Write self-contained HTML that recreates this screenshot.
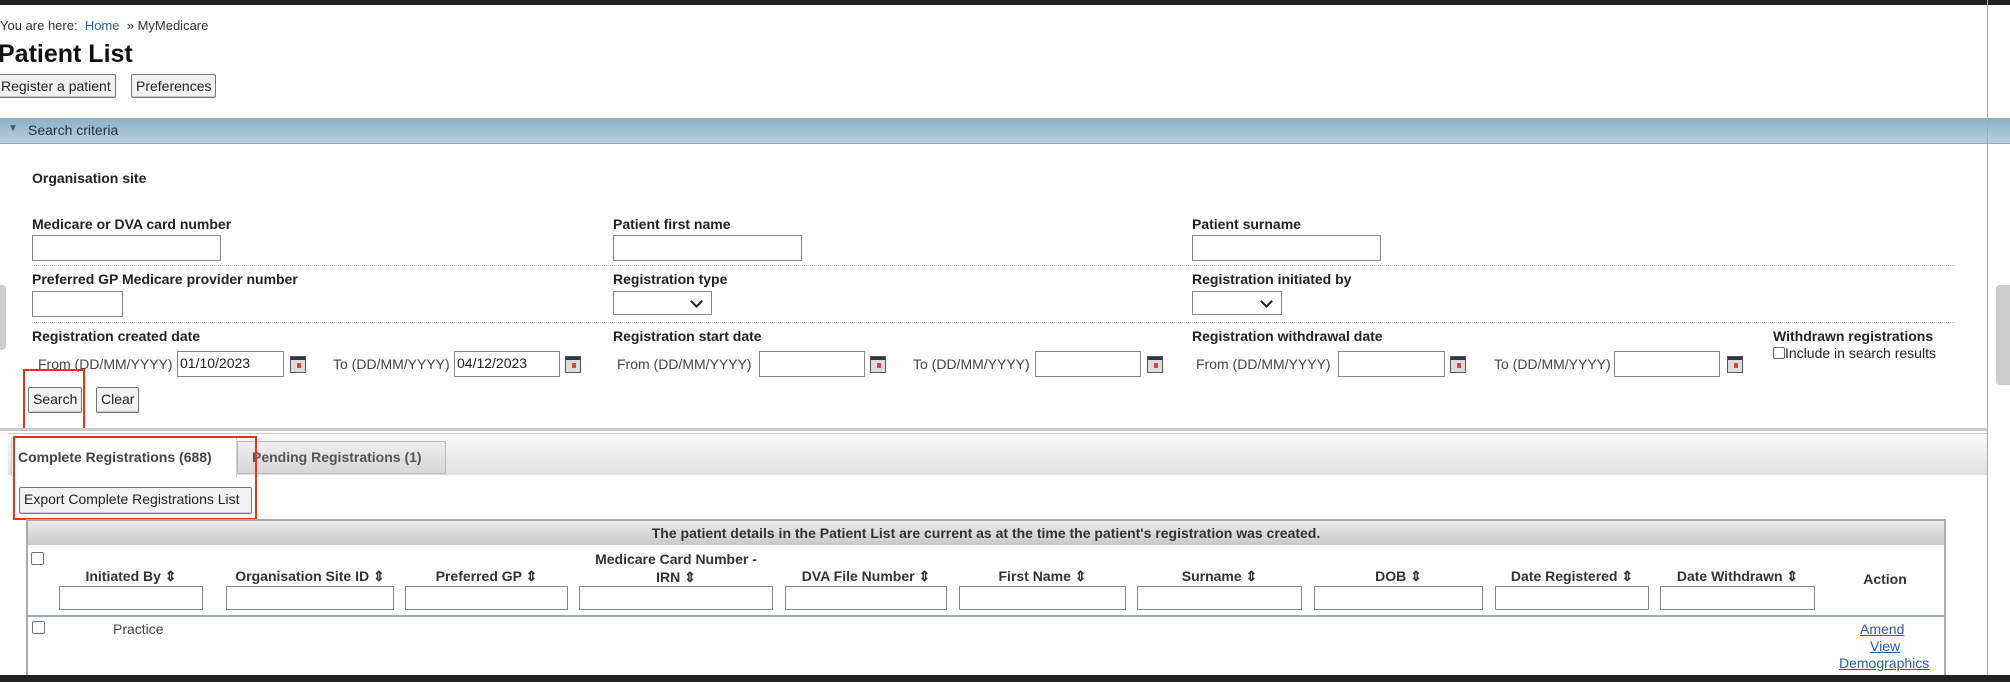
<!DOCTYPE html>
<html><head><meta charset="utf-8"><style>
*{box-sizing:border-box}
body{margin:0;width:2010px;height:682px;overflow:hidden;background:#fff;font-family:"Liberation Sans",Arial,sans-serif;font-size:14px;color:#222;position:relative}
.a{position:absolute;white-space:nowrap}
.b{font-weight:bold}
.in{position:absolute;border:1px solid #888;background:#fff;height:26px}
.btn{position:absolute;border:1px solid #777;background:#f2f2f2;border-radius:2px;height:24px;font-size:14px;padding:3px 4px;white-space:nowrap;box-shadow:inset 0 -1px 0 #ccc}
.cal{position:absolute;width:16px;height:17px;border:1px solid #556;background:linear-gradient(#334 0 3px,#ddd 3px);}
.cal:after{content:"";position:absolute;left:6px;top:6px;width:4px;height:5px;background:#d44}
.sel{position:absolute;border:1px solid #888;height:24px;background:#fff}
.sel:after{content:"";position:absolute;right:10px;top:5px;width:7px;height:7px;border-right:2px solid #222;border-bottom:2px solid #222;transform:rotate(45deg)}
.dot{position:absolute;left:32px;width:1923px;border-top:1px dotted #bbb}
.red{position:absolute;border:2px solid #e8321c}
.lbl{color:#444}
.hd{position:absolute;font-weight:bold;color:#333;text-align:center;font-size:14px}
.lk{color:#2a5db0;text-decoration:underline}
</style></head><body>
<div class="a" style="left:0;top:0;width:2010px;height:5px;background:#222"></div>
<div class="a" style="left:0;top:18px;font-size:13px;color:#333">You are here:&nbsp; <span style="color:#2a5db0">Home</span> &nbsp;» MyMedicare</div>
<div class="a b" style="left:-2px;top:40px;font-size:25px;color:#111">Patient List</div>
<div class="btn" style="left:-4px;top:74px;height:24px">Register a patient</div>
<div class="btn" style="left:131px;top:74px;">Preferences</div>
<div class="a" style="left:0;top:118px;width:2010px;height:26px;background:linear-gradient(#8eb0c9,#b7cfdf);border-bottom:1px solid #9ab"></div>
<div class="a" style="left:8px;top:123px;font-size:10px;color:#456">▼</div>
<div class="a" style="left:28px;top:122px;color:#234">Search criteria</div>
<div class="a b" style="left:32px;top:170px">Organisation site</div>

<div class="a b" style="left:32px;top:216px">Medicare or DVA card number</div>
<div class="in" style="left:32px;top:235px;width:189px"></div>
<div class="a b" style="left:613px;top:216px">Patient first name</div>
<div class="in" style="left:613px;top:235px;width:189px"></div>
<div class="a b" style="left:1192px;top:216px">Patient surname</div>
<div class="in" style="left:1192px;top:235px;width:189px"></div>
<div class="dot" style="top:265px"></div>

<div class="a b" style="left:32px;top:271px">Preferred GP Medicare provider number</div>
<div class="in" style="left:32px;top:291px;width:91px"></div>
<div class="a b" style="left:613px;top:271px">Registration type</div>
<div class="sel" style="left:613px;top:291px;width:99px"></div>
<div class="a b" style="left:1192px;top:271px">Registration initiated by</div>
<div class="sel" style="left:1192px;top:291px;width:90px"></div>
<div class="dot" style="top:322px"></div>

<div class="a b" style="left:32px;top:328px">Registration created date</div>
<div class="a b" style="left:613px;top:328px">Registration start date</div>
<div class="a b" style="left:1192px;top:328px">Registration withdrawal date</div>
<div class="a b" style="left:1773px;top:328px">Withdrawn registrations</div>
<div class="a" style="left:1773px;top:345px;font-size:14px"><span style="display:inline-block;width:12px;height:12px;border:1px solid #666;border-radius:2px;vertical-align:-1px"></span>Include in search results</div>

<div class="a lbl" style="left:38px;top:356px">From (DD/MM/YYYY)</div>
<div class="in" style="left:177px;top:351px;width:107px;padding:3px 2px">01/10/2023</div>
<div class="cal" style="left:290px;top:356px"></div>
<div class="a lbl" style="left:333px;top:356px">To (DD/MM/YYYY)</div>
<div class="in" style="left:454px;top:351px;width:106px;padding:3px 2px">04/12/2023</div>
<div class="cal" style="left:565px;top:356px"></div>
<div class="a lbl" style="left:617px;top:356px">From (DD/MM/YYYY)</div>
<div class="in" style="left:759px;top:351px;width:106px"></div>
<div class="cal" style="left:870px;top:356px"></div>
<div class="a lbl" style="left:913px;top:356px">To (DD/MM/YYYY)</div>
<div class="in" style="left:1035px;top:351px;width:106px"></div>
<div class="cal" style="left:1147px;top:356px"></div>
<div class="a lbl" style="left:1196px;top:356px">From (DD/MM/YYYY)</div>
<div class="in" style="left:1338px;top:351px;width:107px"></div>
<div class="cal" style="left:1450px;top:356px"></div>
<div class="a lbl" style="left:1494px;top:356px">To (DD/MM/YYYY)</div>
<div class="in" style="left:1614px;top:351px;width:106px"></div>
<div class="cal" style="left:1727px;top:356px"></div>

<div class="btn" style="left:28px;top:387px;height:26px">Search</div>
<div class="btn" style="left:96px;top:387px;height:26px">Clear</div>
<div class="red" style="left:23px;top:369px;width:62px;height:61px"></div>
<div class="a" style="left:0;top:428px;width:1988px;height:3px;background:#ccc"></div>
<div class="a" style="left:1987px;top:0;width:1px;height:682px;background:#aaa"></div>
<div class="a" style="left:0;top:285px;width:6px;height:65px;background:#ccc;border-radius:0 4px 4px 0"></div>
<div class="a" style="left:1996px;top:285px;width:14px;height:100px;background:#ccc;border-radius:4px 0 0 4px"></div>

<div class="a" style="left:8px;top:433px;width:1979px;height:42px;background:linear-gradient(#fafafa,#e0e0e0);border-top:1px solid #ccc"></div>
<div class="a" style="left:11px;top:437px;width:226px;height:40px;background:#fff;border:1px solid #ccc;border-bottom:none"></div>
<div class="a b" style="left:18px;top:449px;color:#444">Complete Registrations (688)</div>
<div class="a" style="left:237px;top:441px;width:209px;height:33px;background:linear-gradient(#eee,#d6d6d6);border:1px solid #bbb"></div>
<div class="a b" style="left:252px;top:449px;color:#555">Pending Registrations (1)</div>
<div class="btn" style="left:19px;top:487px;width:233px;height:27px">Export Complete Registrations List</div>
<div class="red" style="left:13px;top:436px;width:244px;height:84px"></div>

<div class="a" style="left:26px;top:519px;width:1920px;height:160px;border:2px solid #aaa;border-bottom:none"></div>
<div class="a b" style="left:28px;top:521px;width:1916px;height:24px;background:linear-gradient(#ececec,#c8c8c8);text-align:center;padding-top:4px;color:#333">The patient details in the Patient List are current as at the time the patient's registration was created.</div>
<div class="a" style="left:31px;top:552px;width:13px;height:13px;border:1px solid #777;border-radius:2px"></div>
<div class="hd" style="left:59px;top:568px;width:144px">Initiated By ⇕</div>
<div class="hd" style="left:226px;top:568px;width:168px">Organisation Site ID ⇕</div>
<div class="hd" style="left:405px;top:568px;width:163px">Preferred GP ⇕</div>
<div class="hd" style="left:579px;top:550px;width:194px;line-height:18px">Medicare Card Number -<br>IRN ⇕</div>
<div class="hd" style="left:785px;top:568px;width:162px">DVA File Number ⇕</div>
<div class="hd" style="left:959px;top:568px;width:167px">First Name ⇕</div>
<div class="hd" style="left:1137px;top:568px;width:165px">Surname ⇕</div>
<div class="hd" style="left:1314px;top:568px;width:169px">DOB ⇕</div>
<div class="hd" style="left:1495px;top:568px;width:154px">Date Registered ⇕</div>
<div class="hd" style="left:1660px;top:568px;width:155px">Date Withdrawn ⇕</div>
<div class="hd" style="left:1840px;top:571px;width:90px">Action</div>
<div class="in" style="left:59px;top:586px;width:144px;height:24px"></div>
<div class="in" style="left:226px;top:586px;width:168px;height:24px"></div>
<div class="in" style="left:405px;top:586px;width:163px;height:24px"></div>
<div class="in" style="left:579px;top:586px;width:194px;height:24px"></div>
<div class="in" style="left:785px;top:586px;width:162px;height:24px"></div>
<div class="in" style="left:959px;top:586px;width:167px;height:24px"></div>
<div class="in" style="left:1137px;top:586px;width:165px;height:24px"></div>
<div class="in" style="left:1314px;top:586px;width:169px;height:24px"></div>
<div class="in" style="left:1495px;top:586px;width:154px;height:24px"></div>
<div class="in" style="left:1660px;top:586px;width:155px;height:24px"></div>
<div class="a" style="left:28px;top:615px;width:1916px;height:2px;background:#9ab"></div>
<div class="a" style="left:32px;top:621px;width:13px;height:13px;border:1px solid #777;border-radius:2px"></div>
<div class="a" style="left:113px;top:621px;color:#444">Practice</div>
<div class="a lk" style="left:1860px;top:621px">Amend</div>
<div class="a lk" style="left:1870px;top:638px">View</div>
<div class="a lk" style="left:1839px;top:655px">Demographics</div>
<div class="a" style="left:0;top:675px;width:2010px;height:7px;background:#222"></div>
</body></html>
